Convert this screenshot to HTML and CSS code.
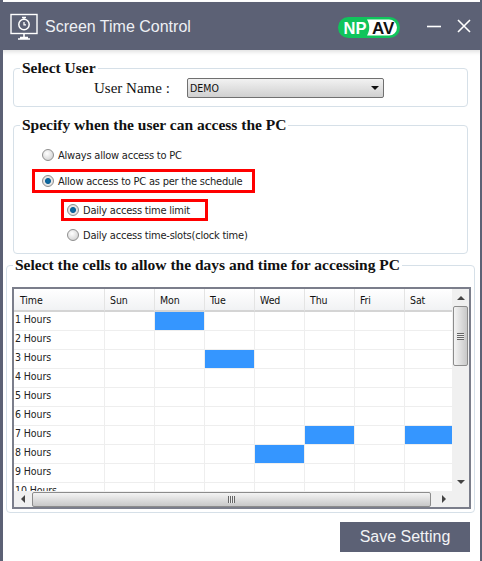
FILE: index.html
```html
<!DOCTYPE html>
<html lang="en">
<head>
    <meta charset="UTF-8">
    <title>Screen Time Control</title>
    <link rel="stylesheet" href="styles.css">
</head>
<body>
    <div class="window">
        <div class="title-bar">
            <svg class="app-icon" width="28" height="28" viewBox="0 0 28 28" fill="none" stroke="#fff">
                <rect x="1" y="1.5" width="26" height="19" stroke-width="1.4"/>
                <path d="M14 21v3M8 26h12M10 24.5h8" stroke-width="1.6"/>
                <circle cx="14" cy="11.5" r="5.2" stroke-width="1.5"/>
                <path d="M12 4.5h4M14 4.5v2M14 9v2.8h2" stroke-width="1.3"/>
            </svg>
            <span class="title">Screen Time Control</span>
            <svg class="logo" width="62" height="21" viewBox="0 0 62 21">
                <rect x="0" y="0" width="62" height="21" rx="10.5" fill="#10c45c"/>
                <path d="M29 2.5H51a8 8 0 0 1 0 16H29c3-5 3-11 0-16z" fill="#fff"/>
                <text x="5.5" y="16.5" class="logo-np">NP</text>
                <text x="34" y="16.5" class="logo-av">AV</text>
            </svg>
            <svg class="win-btn" width="18" height="18" viewBox="0 0 18 18" stroke="#fff" stroke-width="1.6">
                <path d="M2 9.5h14"/>
            </svg>
            <svg class="win-btn close" width="18" height="18" viewBox="0 0 18 18" stroke="#fff" stroke-width="1.6">
                <path d="M3 3l12 12M15 3L3 15"/>
            </svg>
        </div>

        <fieldset class="group user-group">
            <legend>Select User</legend>
            <div class="user-row">
                <label class="user-label">User Name :</label>
                <div class="select-box">DEMO<span class="select-arrow"></span></div>
            </div>
        </fieldset>

        <fieldset class="group access-group">
            <legend>Specify when the user can access the PC</legend>
            <div class="option first"><span class="radio"></span>Always allow access to PC</div>
            <div class="option outlined main"><span class="radio checked"></span>Allow access to PC as per the schedule</div>
            <div class="option outlined sub"><span class="radio checked"></span>Daily access time limit</div>
            <div class="option slots"><span class="radio"></span>Daily access time-slots(clock time)</div>
        </fieldset>

        <fieldset class="group cells-group">
            <legend>Select the cells to allow the days and time for accessing PC</legend>
            <div class="grid-box">
                <div class="grid-top">
                    <div class="grid-view">
                        <table class="hours">
                            <thead>
                                <tr><th>Time</th><th>Sun</th><th>Mon</th><th>Tue</th><th>Wed</th><th>Thu</th><th>Fri</th><th>Sat</th></tr>
                            </thead>
                            <tbody>
                                <tr><td>1 Hours</td><td></td><td class="on"></td><td></td><td></td><td></td><td></td><td></td></tr>
                                <tr><td>2 Hours</td><td></td><td></td><td></td><td></td><td></td><td></td><td></td></tr>
                                <tr><td>3 Hours</td><td></td><td></td><td class="on"></td><td></td><td></td><td></td><td></td></tr>
                                <tr><td>4 Hours</td><td></td><td></td><td></td><td></td><td></td><td></td><td></td></tr>
                                <tr><td>5 Hours</td><td></td><td></td><td></td><td></td><td></td><td></td><td></td></tr>
                                <tr><td>6 Hours</td><td></td><td></td><td></td><td></td><td></td><td></td><td></td></tr>
                                <tr><td>7 Hours</td><td></td><td></td><td></td><td></td><td class="on"></td><td></td><td class="on"></td></tr>
                                <tr><td>8 Hours</td><td></td><td></td><td></td><td class="on"></td><td></td><td></td><td></td></tr>
                                <tr><td>9 Hours</td><td></td><td></td><td></td><td></td><td></td><td></td><td></td></tr>
                                <tr><td>10 Hours</td><td></td><td></td><td></td><td></td><td></td><td></td><td></td></tr>
                            </tbody>
                        </table>
                    </div>
                    <div class="vscroll">
                        <span class="arrow up"></span>
                        <div class="vthumb"><span class="grip-h"></span></div>
                        <span class="vspace"></span>
                        <span class="arrow down"></span>
                    </div>
                </div>
                <div class="hscroll">
                    <span class="arrow left"></span>
                    <div class="hthumb"><span class="grip-v"></span></div>
                    <span class="arrow right"></span>
                </div>
            </div>
        </fieldset>

        <div class="footer">
            <button class="save-btn">Save Setting</button>
        </div>
    </div>
</body>
</html>
```

FILE: styles.css
```css
html, body {
    margin: 0;
    padding: 0;
    background-color: #fff;
}
.window {
    box-sizing: border-box;
    width: 482px;
    height: 561px;
    padding-top: 2px;
    border-left: 3px solid #5c6175;
    border-right: 2px solid #5c6175;
    font-family: "Liberation Sans", Arial, sans-serif;
    color: #111;
    overflow: hidden;
}
.title-bar {
    display: flex;
    align-items: center;
    box-sizing: border-box;
    height: 48px;
    margin-left: -3px;
    margin-right: -3px;
    padding: 2px 0 0 10px;
    background-color: #5c6175;
    color: #fff;
    box-shadow: 0 2px 4px rgba(0, 0, 0, 0.12);
}
.title {
    margin-left: 7px;
    font-size: 16px;
    color: #eef0f4;
}
.logo {
    margin-left: 147px;
}
.logo text {
    font-family: "Liberation Sans", Arial, sans-serif;
    font-weight: bold;
}
.logo-np {
    fill: #fff;
    font-size: 16.5px;
}
.logo-av {
    fill: #111;
    font-size: 17px;
}
.win-btn {
    margin: -2px 0 0 25px;
}
.win-btn.close {
    margin-left: 12px;
}

/* group boxes */
.group {
    box-sizing: border-box;
    min-width: 0;
    padding: 0;
    border: 1px solid #d6e0e8;
    border-radius: 4px;
}
.group legend {
    margin-left: 6px;
    padding: 0 2px;
    font-family: "Liberation Serif", "Times New Roman", serif;
    font-weight: bold;
    font-size: 15.5px;
    line-height: 16px;
    white-space: nowrap;
}
.user-group {
    height: 47px;
    margin: 10px 12px 0 10px;
}
.user-row {
    display: flex;
    align-items: center;
    height: 20px;
    margin-top: 2px;
    padding-left: 80px;
}
.user-label {
    width: 93px;
    font-family: "Liberation Serif", "Times New Roman", serif;
    font-size: 15px;
}
.select-box {
    box-sizing: border-box;
    position: relative;
    width: 197px;
    height: 20px;
    padding-left: 2px;
    border: 1px solid #707070;
    border-radius: 2px;
    background: linear-gradient(#f2f2f2, #d0d0d0);
    font-family: "DejaVu Sans Condensed", "DejaVu Sans", sans-serif;
    font-stretch: condensed;
    font-size: 10.5px;
    line-height: 19px;
}
.select-arrow {
    position: absolute;
    right: 4px;
    top: 7px;
    border-top: 4px solid #111;
    border-left: 4px solid transparent;
    border-right: 4px solid transparent;
}
.access-group {
    height: 137px;
    margin: 10px 12px 0 10px;
}
.option {
    display: flex;
    align-items: center;
    box-sizing: border-box;
    height: 24px;
    font-family: "DejaVu Sans Condensed", "DejaVu Sans", sans-serif;
    font-stretch: condensed;
    font-size: 11px;
    letter-spacing: -0.22px;
    color: #222;
}
.option.first {
    height: 18px;
    margin-top: 13px;
    padding-left: 28px;
}
.option.outlined {
    border: 3px solid #f00;
}
.option.main {
    width: 223px;
    margin: 5px 0 0 18px;
    padding-left: 7px;
}
.option.sub {
    width: 147px;
    height: 22px;
    margin: 6px 0 0 47px;
    padding-left: 3px;
}
.option.slots {
    height: 18px;
    margin-top: 5px;
    padding-left: 53px;
}
.radio {
    box-sizing: border-box;
    flex: none;
    width: 12px;
    height: 12px;
    margin-right: 4px;
    border: 1px solid #8e8e8e;
    border-radius: 50%;
    background: radial-gradient(circle at 40% 35%, #fff, #c9c9c9);
}
.radio.checked {
    background: radial-gradient(circle, #0b6fa8 0, #0b5f95 2.5px, #e6e6e6 3.5px, #d5d5d5 100%);
}
.cells-group {
    height: 256px;
    margin: 3px 5px 0 3px;
}

/* the schedule grid */
.grid-box {
    box-sizing: border-box;
    width: 459px;
    height: 222px;
    margin: 14px 0 0 5px;
    border: 2px solid #7b7e8b;
    background-color: #f0f0f0;
}
.grid-top {
    display: flex;
    height: 202px;
}
.grid-view {
    width: 438px;
    height: 202px;
    overflow: hidden;
    background-color: #fff;
}
.hours {
    width: 441px;
    table-layout: fixed;
    border-collapse: separate;
    border-spacing: 0;
    font-family: "DejaVu Sans Condensed", "DejaVu Sans", sans-serif;
    font-stretch: condensed;
    font-size: 10.5px;
    letter-spacing: -0.1px;
}
.hours th {
    box-sizing: border-box;
    width: 50px;
    height: 23px;
    padding: 1px 0 0 5px;
    border-right: 1px solid #e4e4e4;
    border-bottom: 2px solid #d4d4d4;
    background: linear-gradient(#fff, #f1f2f4);
    font-weight: normal;
    text-align: left;
}
.hours th:first-child {
    width: 91px;
    padding-left: 6px;
}
.hours td {
    box-sizing: border-box;
    height: 19px;
    padding: 0 0 4px 1px;
    border-right: 1px solid #eee;
    border-bottom: 1px solid #eee;
    line-height: 14px;
    white-space: nowrap;
    color: #222;
}
.hours td.on {
    background-color: #3596ff;
}
.vscroll {
    display: flex;
    flex-direction: column;
    align-items: center;
    width: 17px;
}
.vthumb {
    display: flex;
    align-items: center;
    justify-content: center;
    box-sizing: border-box;
    width: 15px;
    height: 60px;
    border: 1px solid #8c8c8c;
    border-radius: 2px;
    background: linear-gradient(to right, #f4f4f4, #c8c8c8);
}
.vspace {
    flex: 1;
}
.hscroll {
    display: flex;
    align-items: center;
    height: 16px;
    padding-right: 17px;
}
.hthumb {
    display: flex;
    align-items: center;
    justify-content: center;
    box-sizing: border-box;
    flex: 1;
    height: 15px;
    border: 1px solid #8c8c8c;
    border-radius: 2px;
    background: linear-gradient(#f4f4f4, #c8c8c8);
}
.arrow {
    display: block;
    flex: none;
    width: 0;
    height: 0;
}
.arrow.up {
    margin: 7px 0 6px;
    border-bottom: 4px solid #444;
    border-left: 4px solid transparent;
    border-right: 4px solid transparent;
}
.arrow.down {
    margin: 0 0 7px;
    border-top: 4px solid #444;
    border-left: 4px solid transparent;
    border-right: 4px solid transparent;
}
.arrow.left {
    margin: 0 7px;
    border-right: 4px solid #444;
    border-top: 4px solid transparent;
    border-bottom: 4px solid transparent;
}
.arrow.right {
    margin: 0 6px 0 11px;
    border-left: 4px solid #444;
    border-top: 4px solid transparent;
    border-bottom: 4px solid transparent;
}
.grip-h {
    width: 7px;
    height: 7px;
    background: repeating-linear-gradient(#666 0, #666 1px, #eee 1px, #eee 2px);
}
.grip-v {
    width: 7px;
    height: 7px;
    background: repeating-linear-gradient(to right, #666 0, #666 1px, #eee 1px, #eee 2px);
}
.footer {
    display: flex;
    justify-content: flex-end;
    margin-top: 9px;
    padding-right: 10px;
}
.save-btn {
    width: 130px;
    height: 30px;
    padding: 0;
    border: none;
    background-color: #5c6175;
    color: #f2f3f6;
    font-family: "Liberation Sans", Arial, sans-serif;
    font-size: 16px;
}
```
